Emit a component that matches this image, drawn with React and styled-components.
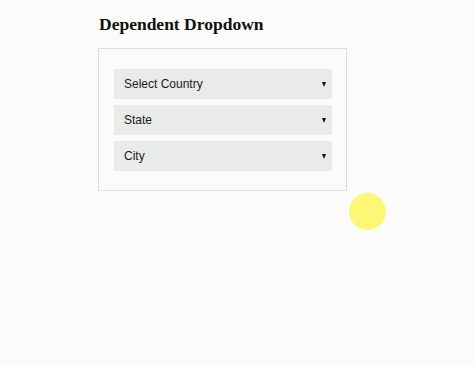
import React from 'react';
import styled, { createGlobalStyle } from 'styled-components';

const GlobalStyle = createGlobalStyle`
  html, body {
    margin: 0;
    padding: 0;
    background: #fbfcf9;
  }
  body {
    width: 474px;
    height: 366px;
    overflow: hidden;
    font-family: 'Liberation Serif', 'Times New Roman', serif;
  }
`;

const Page = styled.div`
  position: relative;
  width: 474px;
  height: 366px;
  padding: 13px 0 0 98px;
  box-sizing: border-box;
`;

const Title = styled.h2`
  margin: 0 0 13px 1px;
  font-size: 17.5px;
  line-height: 22px;
  font-weight: bold;
  color: #111;
`;

const Card = styled.div`
  width: 249px;
  box-sizing: border-box;
  border: 1px solid #dcdedb;
  padding: 20px 14px 19px 15px;
  display: flex;
  flex-direction: column;
  gap: 6px;
`;

const SelectWrap = styled.div`
  position: relative;
  height: 30px;

  &::after {
    content: '';
    position: absolute;
    right: 6px;
    top: 13px;
    border-left: 2.5px solid transparent;
    border-right: 2.5px solid transparent;
    border-top: 5px solid #111;
    pointer-events: none;
  }
`;

const Select = styled.select`
  appearance: none;
  -webkit-appearance: none;
  width: 100%;
  height: 30px;
  border: none;
  border-radius: 0;
  outline: none;
  background: #e9ebe8;
  padding: 0 0 0 10px;
  font-family: 'Liberation Sans', Arial, sans-serif;
  font-size: 12px;
  color: #1a1a1a;
`;

const Cursor = styled.div`
  position: absolute;
  left: 349px;
  top: 193px;
  width: 37px;
  height: 37px;
  border-radius: 50%;
  background: #fcf776;
`;

function Dropdown({ label }) {
  return (
    <SelectWrap>
      <Select defaultValue="">
        <option value="">{label}</option>
      </Select>
    </SelectWrap>
  );
}

export default function App() {
  return (
    <>
      <GlobalStyle />
      <Page>
        <Title>Dependent Dropdown</Title>
        <Card>
          <Dropdown label="Select Country" />
          <Dropdown label="State" />
          <Dropdown label="City" />
        </Card>
        <Cursor />
      </Page>
    </>
  );
}
